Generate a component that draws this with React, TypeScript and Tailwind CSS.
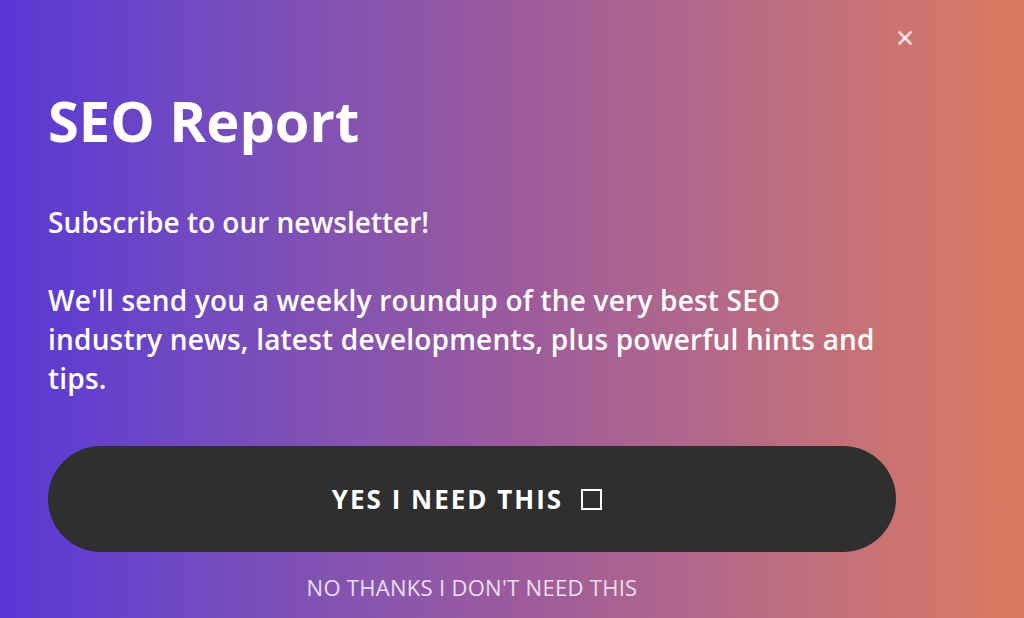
import { X } from 'lucide-react';

const App = () => {
  return (
    <div
      className="relative w-[1024px] h-[618px] overflow-hidden bg-gradient-to-r from-[#5a35d6] via-[#9c5a9d] to-[#dc7a5e] text-white"
      style={{ fontFamily: '"Open Sans", "Noto Sans", sans-serif' }}
    >
      <button className="absolute left-[894px] top-[27px] text-white/75">
        <X className="h-[22px] w-[22px]" strokeWidth={3} />
      </button>

      <div className="pl-[48px] pr-[128px] pt-[84px]">
        <h1 className="text-[56px] font-bold leading-[72px]">SEO Report</h1>

        <div className="mt-[47px] text-[28px] font-semibold leading-[39px]">
          <p>Subscribe to our newsletter!</p>
          <p className="mt-[39px] w-[830px] tracking-[0.2px]">
            We'll send you a weekly roundup of the very best SEO industry news,
            latest developments, plus powerful hints and tips.
          </p>
        </div>

        <button className="mt-[48px] flex h-[106px] w-full items-center justify-center gap-[18px] rounded-full bg-[#2f2f2f] pr-[10px] text-[26px] font-bold tracking-[2px]">
          <span>YES I NEED THIS</span>
          <span className="h-[21px] w-[21px] border-[2.5px] border-white" />
        </button>

        <div className="mt-[20px] text-center text-[22px] leading-[30px] tracking-[0.3px] text-white/80">
          NO THANKS I DON'T NEED THIS
        </div>
      </div>
    </div>
  );
};

export default App;
